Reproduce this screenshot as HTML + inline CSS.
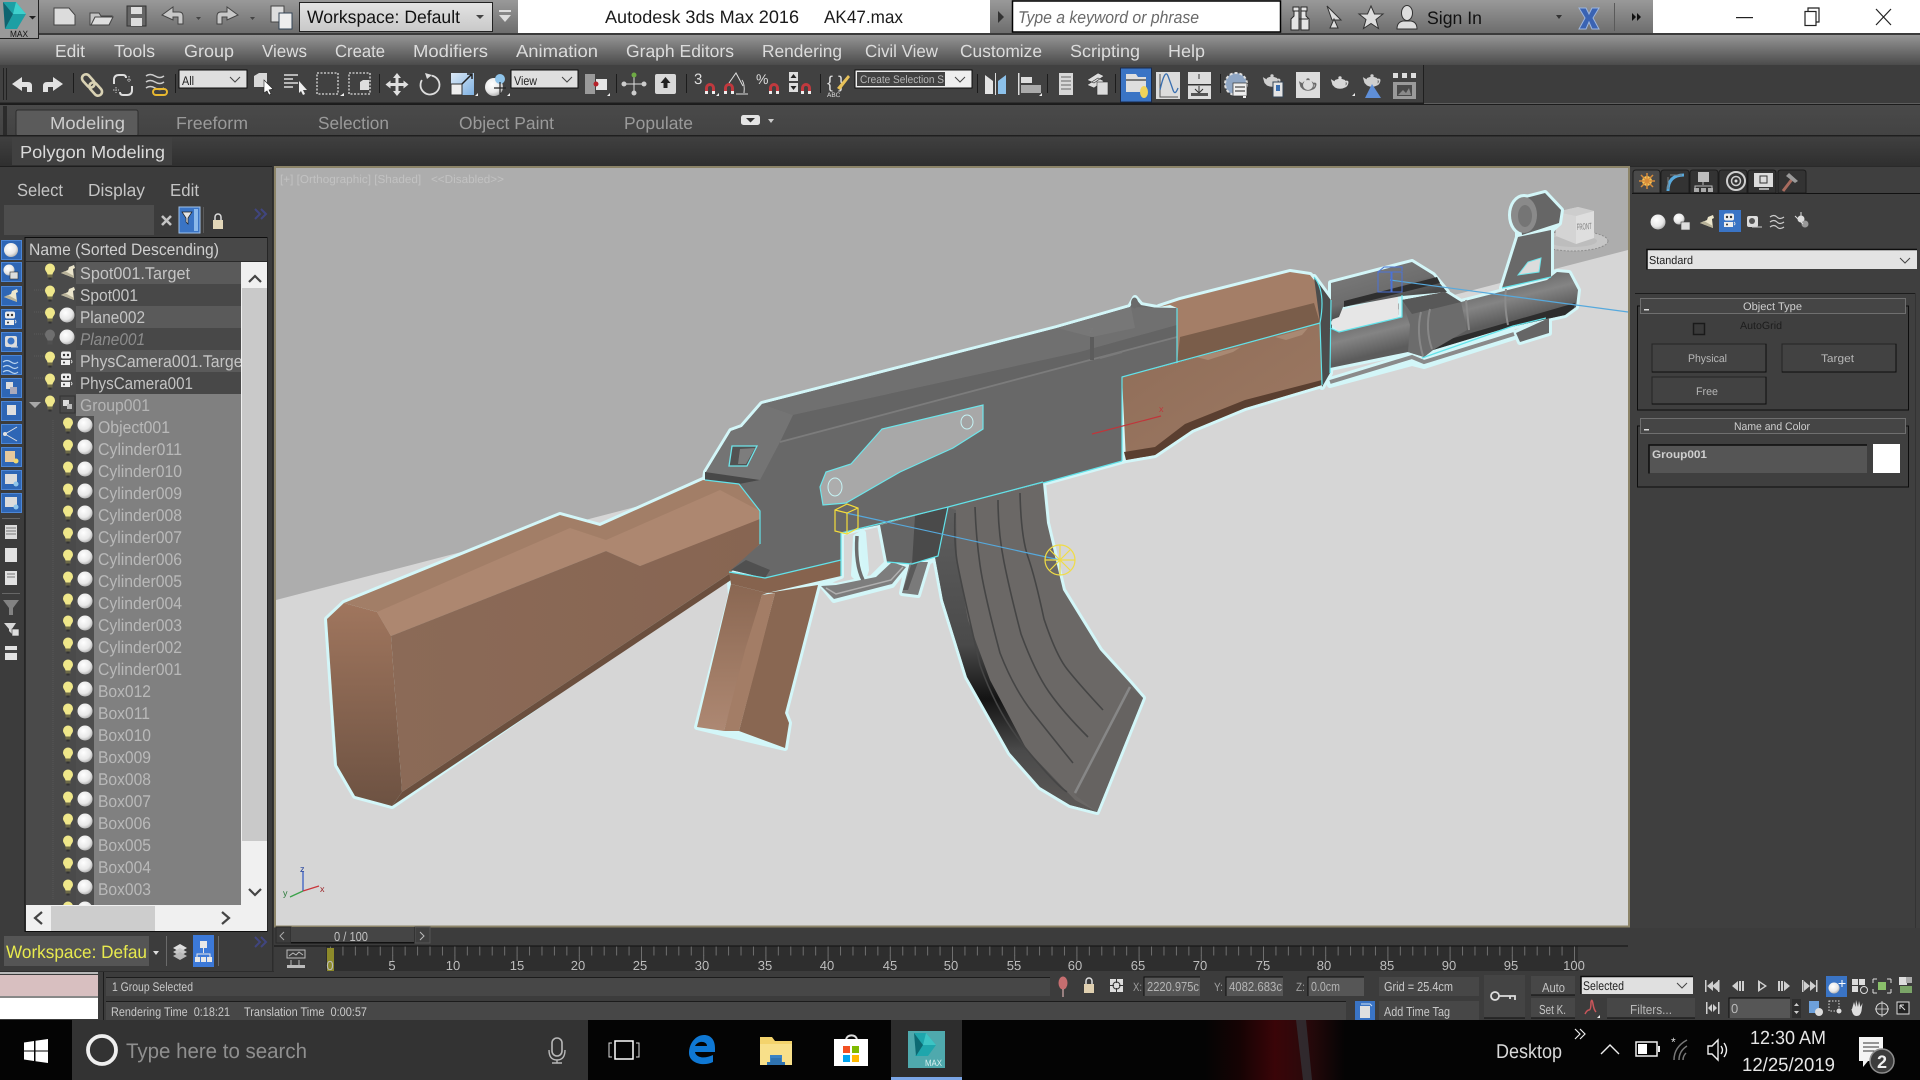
<!DOCTYPE html>
<html lang="en"><head><meta charset="utf-8"><title>Autodesk 3ds Max 2016 AK47.max</title>
<style>
html,body{margin:0;padding:0;background:#3c3c3c;width:1920px;height:1080px;overflow:hidden}
svg{display:block;position:absolute;left:0;top:0}
text{font-family:"Liberation Sans",sans-serif;white-space:pre}
.m{font-size:17.5px;fill:#dcdcdc}
.t{font-size:17px;fill:#c4c4c4}
.n{font-size:13px;fill:#bcbcbc;text-anchor:middle}
.i{fill:#e2e2e2}
</style></head><body>
<svg width="1920" height="1080" viewBox="0 0 1920 1080" xmlns="http://www.w3.org/2000/svg" text-rendering="geometricPrecision">
<defs>
<linearGradient id="gTitle" x1="0" y1="0" x2="0" y2="1"><stop offset="0" stop-color="#999"/><stop offset="1" stop-color="#6c6c6c"/></linearGradient>
<linearGradient id="gMenu" x1="0" y1="0" x2="0" y2="1"><stop offset="0" stop-color="#959595"/><stop offset="1" stop-color="#4b4b4b"/></linearGradient>
<linearGradient id="gRib" x1="0" y1="0" x2="0" y2="1"><stop offset="0" stop-color="#4a4a4a"/><stop offset="1" stop-color="#434343"/></linearGradient>
<linearGradient id="gRib2" x1="0" y1="0" x2="0" y2="1"><stop offset="0" stop-color="#414141"/><stop offset="1" stop-color="#2f2f2f"/></linearGradient>
<linearGradient id="gCombo" x1="0" y1="0" x2="0" y2="1"><stop offset="0" stop-color="#e4e4e4"/><stop offset="1" stop-color="#c8c8c8"/></linearGradient>
<linearGradient id="gEnd" x1="0" y1="0" x2="0" y2="1"><stop offset="0" stop-color="#a0765e"/><stop offset="1" stop-color="#6d5242"/></linearGradient>
<linearGradient id="gMain" x1="0" y1="0" x2="1" y2="0"><stop offset="0" stop-color="#8b6a57"/><stop offset="1" stop-color="#876552"/></linearGradient>
<linearGradient id="gHand" x1="0" y1="0" x2="1" y2="1"><stop offset="0" stop-color="#8f6d58"/><stop offset="1" stop-color="#9d7963"/></linearGradient>
<linearGradient id="gBarrel" gradientUnits="userSpaceOnUse" x1="1445" y1="294" x2="1455" y2="334"><stop offset="0" stop-color="#646464"/><stop offset="0.5" stop-color="#848484"/><stop offset="1" stop-color="#5c5c5c"/></linearGradient>
<linearGradient id="gTube" gradientUnits="userSpaceOnUse" x1="1380" y1="272" x2="1390" y2="304"><stop offset="0" stop-color="#757575"/><stop offset="0.55" stop-color="#6d6d6d"/><stop offset="1" stop-color="#4a4a4a"/></linearGradient>
<linearGradient id="gGrip" x1="0" y1="0" x2="0" y2="1"><stop offset="0" stop-color="#8a6752"/><stop offset="0.65" stop-color="#a27d67"/><stop offset="1" stop-color="#ad8873"/></linearGradient>
<linearGradient id="gMagS" x1="0" y1="0" x2="0" y2="1"><stop offset="0" stop-color="#5f5f5f"/><stop offset="0.45" stop-color="#4a4a4a"/><stop offset="0.63" stop-color="#141414"/><stop offset="0.8" stop-color="#4a4a4a"/><stop offset="1" stop-color="#5d5a58"/></linearGradient>
<radialGradient id="gSph" cx="0.4" cy="0.35" r="0.75"><stop offset="0" stop-color="#fff"/><stop offset="0.6" stop-color="#e8e8e8"/><stop offset="1" stop-color="#9e9e9e"/></radialGradient>
<linearGradient id="gBlue" x1="0" y1="0" x2="1" y2="1"><stop offset="0" stop-color="#dce9f6"/><stop offset="1" stop-color="#7fb1e2"/></linearGradient>
<linearGradient id="gRed" x1="0" y1="0" x2="1" y2="0"><stop offset="0" stop-color="#040404"/><stop offset="0.25" stop-color="#160304"/><stop offset="0.5" stop-color="#3a0508"/><stop offset="0.72" stop-color="#2a090b"/><stop offset="1" stop-color="#040404"/></linearGradient>
<symbol id="bulb" viewBox="0 0 12 18" width="12" height="18"><path d="M6 0.5a5 5 0 0 1 5 5c0 2.5-2 3.500-2.500 6h-5c-.5-2.500-2.500-3.500-2.500-6a5 5 0 0 1 5-5z" fill="#efe78a"/><rect x="3.500" y="11.500" width="5" height="3" fill="#6d6a48"/><rect x="4.500" y="14.500" width="3" height="2" fill="#333"/></symbol>
<symbol id="bulbg" viewBox="0 0 12 18" width="12" height="18"><path d="M6 0.5a5 5 0 0 1 5 5c0 2.5-2 3.500-2.500 6h-5c-.5-2.500-2.500-3.500-2.500-6a5 5 0 0 1 5-5z" fill="#6f6f6f"/><rect x="3.500" y="11.500" width="5" height="4" fill="#505050"/></symbol>
<symbol id="mag" viewBox="0 0 12 12" width="12" height="12"><path d="M1 12V6a5 5 0 0 1 10 0v6H8V6a2 2 0 0 0-4 0v6z" fill="#c0393e"/><rect x="1" y="9" width="3" height="3" fill="#eee"/><rect x="8" y="9" width="3" height="3" fill="#eee"/></symbol>
<symbol id="blueic" viewBox="0 0 21 20" width="21" height="20"><rect x="0.500" y="0.500" width="20" height="19" fill="#2e66b5" stroke="#4c86d6"/></symbol>
<symbol id="pot" viewBox="0 0 24 20" width="24" height="20"><path d="M6 7q6-3 12 0q2 4 0 9q-6 3-12 0q-2-5 0-9z"/><path d="M6 9L1 6l2 7 3 3z"/><path d="M18 8q5-1 4 3t-4 5l0-2q2-1 2-3t-2-1z"/><circle cx="12" cy="4.500" r="2"/></symbol>
<symbol id="spot" viewBox="0 0 16 16" width="16" height="16"><path d="M14 1l1 3-2 1 1 9-13-5 7-3 1-3z" fill="#ece6cc"/><path d="M1 9l13 5 0-2-9-5z" fill="#b9b39a"/></symbol>
<symbol id="cam" viewBox="0 0 14 16" width="14" height="16"><rect x="1" y="0.500" width="10" height="7" rx="2" fill="#eee"/><circle cx="4" cy="4" r="1.200" fill="#333"/><circle cx="8" cy="4" r="1.200" fill="#333"/><rect x="1" y="9" width="9" height="5" fill="#eee"/><circle cx="4" cy="11.500" r="1" fill="#333"/><path d="M11 12q2-1 0-3" fill="none" stroke="#ddd"/></symbol>
<g id="sil">
<polygon points="327,619 344,603 560,515 600,526 703,480 739,484 760,511 760,544 729,574 392,806 355,796 337,765"/>
<polygon points="762,404 1057,328 1130,307 1135,298 1141,305 1157,308 1177,308 1177,363 1320,323 1322,385 1245,408 1192,430 1155,455 1126,460 1043,483 948,507 841,533 841,560 765,578 731,570 760,544 760,511 739,484 705,480 706,472 731,431 742,427"/>
<polygon points="1159,307 1180,300 1290,272 1310,275 1322,290 1320,323 1177,363"/>
<polygon points="729,572 731,595 697,727 785,748 789,723 785,713 818,585 841,576 841,560 765,578"/>
<path d="M821 584l13 16 58-15 14-18-18-5-16 16-36 8z"/>
<polygon points="856,537 863,533 866,570 862,582 854,575"/>
<polygon points="880,525 948,507 938,556 928,562 918,595 902,593 908,562 887,562"/>
<polygon points="1043,483 1047,523 1063,590 1100,650 1130,683 1143,698 1097,812 1070,805 1040,787 1010,753 967,677 943,600 935,557 948,507"/>
<polygon points="1314,277 1333,303 1330,373 1322,387 1320,323"/>
<polygon points="1331,283 1412,262 1433,275 1447,292 1402,300 1343,307 1339,317 1331,320"/>
<polygon points="1330,328 1339,332 1402,317 1402,300 1445,292 1461,302 1547,280 1557,272 1569,273 1578,290 1576,307 1565,315 1506,328 1433,350 1424,357 1408,352 1330,368"/>
<polygon points="1330,380 1412,355 1424,360 1512,331 1514,337 1424,366 1412,363 1330,385"/>
<polygon points="1516,333 1549,318 1549,333 1520,342"/>
<polygon points="1502,288 1518,237 1518,200 1545,193 1561,210 1559,223 1551,230 1551,277"/>
<ellipse cx="1524" cy="215" rx="13" ry="18"/>
</g>
<clipPath id="rows"><rect x="25" y="262" width="216" height="643"/></clipPath>
<clipPath id="wsclip"><rect x="4" y="936" width="145" height="30"/></clipPath>
</defs>

<!-- base -->
<rect width="1920" height="1080" fill="#3c3c3c"/>

<!-- title bar -->
<rect x="0" y="0" width="518" height="34" fill="url(#gTitle)"/>
<rect x="518" y="0" width="472" height="34" fill="#fff"/>
<rect x="990" y="0" width="663" height="34" fill="url(#gTitle)"/>
<rect x="1653" y="0" width="267" height="34" fill="#fff"/>
<rect x="0" y="33" width="1920" height="1.500" fill="#3a3a3a"/>
<!-- menu -->
<rect x="0" y="35" width="1920" height="30" fill="url(#gMenu)"/>
<!-- max button -->
<path d="M0 0H38V38H0Z" fill="#9a9a9a"/><path d="M0 38.500H38.500V0" fill="none" stroke="#222"/>
<path d="M3 2h13l10 12-9 15H5l8-15z" fill="#1c9fa4"/><path d="M3 2l10 12-8 15z" fill="#0d6470"/><path d="M16 2l10 12H13z" fill="#3fd0cc"/>
<text x="10" y="37" font-size="9" fill="#111" textLength="18" lengthAdjust="spacingAndGlyphs">MAX</text>
<path d="M29 16h7l-3.500 3.500z" fill="#222"/>
<!-- qat icons -->
<path d="M54 8h15l6 7v10H54z" fill="#dcdcdc" stroke="#444"/>
<path d="M90 13h9l2 3h11l-3 9H90z" fill="#c4c4c4" stroke="#444"/><path d="M91 25l4-8h18l-4 8z" fill="#dedede" stroke="#444"/>
<path d="M127 6h19v20h-19z" fill="#666" stroke="#333"/><rect x="131" y="7" width="11" height="7" fill="#ddd"/><rect x="131" y="18" width="11" height="8" fill="#ddd"/>
<path d="M162 15l11-8v5h6q4 0 4 4v8h-5v-7h-5v3z" fill="#c8c8c8" stroke="#444"/>
<path d="M196 17h5l-2.500 3z" fill="#444"/>
<path d="M238 15l-11-8v5h-6q-4 0-4 4v8h5v-7h5v3z" fill="#c8c8c8" stroke="#444"/>
<path d="M250 17h5l-2.500 3z" fill="#444"/>
<rect x="271" y="6" width="13" height="16" fill="#ddd" stroke="#444"/><rect x="279" y="13" width="13" height="16" fill="#eee" stroke="#345"/>
<rect x="299.500" y="2.500" width="193" height="29" fill="url(#gCombo)" stroke="#222"/>
<text x="307" y="23" font-size="18" fill="#111" textLength="153" lengthAdjust="spacingAndGlyphs">Workspace: Default</text>
<path d="M476 15h8l-4 4z" fill="#444"/>
<rect x="499" y="10" width="12" height="2" fill="#ddd"/><path d="M499 15h12l-6 7z" fill="#ddd"/>
<text x="605" y="23" font-size="18" fill="#1a1a1a" textLength="194" lengthAdjust="spacingAndGlyphs">Autodesk 3ds Max 2016</text>
<text x="824" y="23" font-size="18" fill="#1a1a1a" textLength="79" lengthAdjust="spacingAndGlyphs">AK47.max</text>
<path d="M998 11l6 6-6 6z" fill="#333"/>
<rect x="1012.500" y="1" width="268" height="31" fill="#fff" stroke="#000" stroke-width="1.500"/>
<text x="1018" y="23" font-size="17" font-style="italic" fill="#6a6a6a" textLength="181" lengthAdjust="spacingAndGlyphs">Type a keyword or phrase</text>
<!-- info icons -->
<g fill="#e4e4e4" stroke="#2a2a2a"><path d="M1291 30v-11l3-3v-5h5v19z"/><path d="M1301 30V11h5v5l3 3v11z"/><path d="M1293 7h6v4h-6zM1301 7h6v4h-6z"/></g>
<path d="M1299 19h9" stroke="#2a2a2a"/>
<path d="M1327 6l14 14-9 0zM1330 28l4-9 4 9z" fill="#ddd" stroke="#333"/>
<path d="M1371 6l3.500 8h8.500l-7 5.500 2.500 9-7.500-5-7.500 5 2.500-9-7-5.500h8.500z" fill="#ddd" stroke="#333"/>
<ellipse cx="1407" cy="13" rx="5.500" ry="7.500" fill="#ddd" stroke="#333"/><path d="M1397 29q0-7 6-8h8q6 1 6 8z" fill="#ddd" stroke="#333"/>
<text x="1427" y="24" font-size="18" fill="#111" textLength="55" lengthAdjust="spacingAndGlyphs">Sign In</text>
<path d="M1556 15h6l-3 4z" fill="#333"/>
<path d="M1579 8h7l3 6 3-6h7l-6 10 6 11h-7l-3-7-3 7h-7l6-11z" fill="#3a63b3" stroke="#9db6df"/>
<rect x="1614" y="3" width="1" height="28" fill="#5a5a5a"/>
<path d="M1632 13l4 4-4 4zM1637 13l4 4-4 4z" fill="#111"/>
<!-- window buttons -->
<rect x="1736" y="17" width="17" height="1.200" fill="#222"/>
<rect x="1805" y="11.500" width="11" height="14" fill="#fff" stroke="#222" stroke-width="1.200"/><path d="M1808 11v-3h11v14h-3" fill="none" stroke="#222" stroke-width="1.200"/>
<path d="M1876 9l15 16M1891 9l-15 16" stroke="#222" stroke-width="1.200"/>

<!-- menu text -->
<text class="m" x="55" y="57" textLength="30" lengthAdjust="spacingAndGlyphs">Edit</text>
<text class="m" x="114" y="57" textLength="41" lengthAdjust="spacingAndGlyphs">Tools</text>
<text class="m" x="184" y="57" textLength="50" lengthAdjust="spacingAndGlyphs">Group</text>
<text class="m" x="262" y="57" textLength="45" lengthAdjust="spacingAndGlyphs">Views</text>
<text class="m" x="335" y="57" textLength="50" lengthAdjust="spacingAndGlyphs">Create</text>
<text class="m" x="413" y="57" textLength="75" lengthAdjust="spacingAndGlyphs">Modifiers</text>
<text class="m" x="516" y="57" textLength="82" lengthAdjust="spacingAndGlyphs">Animation</text>
<text class="m" x="626" y="57" textLength="108" lengthAdjust="spacingAndGlyphs">Graph Editors</text>
<text class="m" x="762" y="57" textLength="80" lengthAdjust="spacingAndGlyphs">Rendering</text>
<text class="m" x="865" y="57" textLength="73" lengthAdjust="spacingAndGlyphs">Civil View</text>
<text class="m" x="960" y="57" textLength="82" lengthAdjust="spacingAndGlyphs">Customize</text>
<text class="m" x="1070" y="57" textLength="70" lengthAdjust="spacingAndGlyphs">Scripting</text>
<text class="m" x="1168" y="57" textLength="37" lengthAdjust="spacingAndGlyphs">Help</text>

<!-- main toolbar -->
<rect x="0" y="65" width="1920" height="39" fill="#3d3d3d"/>
<rect x="0" y="65" width="1424" height="38" fill="#414141"/>
<rect x="1423" y="65" width="1" height="38" fill="#1f1f1f"/>
<rect x="0" y="102.500" width="1424" height="1.500" fill="#1e1e1e"/>
<rect x="1424" y="103" width="496" height="2" fill="#5e5e5e"/>
<rect x="3" y="68" width="1" height="32" fill="#222"/><rect x="6" y="68" width="1" height="32" fill="#222"/>
<!-- undo redo -->
<path d="M12 84l10-7v5h6q4 0 4 4v6h-5v-5h-5v4z" class="i"/>
<path d="M63 84l-10-7v5h-6q-4 0-4 4v6h5v-5h5v4z" class="i"/>
<rect x="73" y="73" width="1" height="20" fill="#1c1c1c"/>
<!-- link -->
<g transform="rotate(48 92 85)" fill="none" stroke="#d9d2b4" stroke-width="2.600"><rect x="79" y="81" width="15" height="8" rx="4"/><rect x="90" y="81" width="15" height="8" rx="4"/></g>
<!-- unlink -->
<path d="M114 84v-4q0-5 5-5h4q3 0 3 3M132 86v4q0 5-5 5h-4q-3 0-3-3" fill="none" stroke="#ddd" stroke-width="2"/>
<path d="M127 80h5M129 76v6M113 90h6M116 87v6" stroke="#999" stroke-width="1.500" stroke-dasharray="1.500 1"/>
<path d="M146 76q4-3 9 0t9 0M146 82q4-3 9 0t9 0M146 88q4-3 9 0t9 0" fill="none" stroke="#ccc" stroke-width="1.500"/><rect x="153" y="89" width="14" height="6" rx="3" fill="none" stroke="#e8b830" stroke-width="2"/>
<rect x="175" y="74" width="1" height="19" fill="#1c1c1c"/>
<!-- all combo -->
<rect x="179" y="70" width="68" height="18" fill="#dfdfdf" stroke="#0d0d0d"/>
<text x="182" y="85" font-size="12.500" fill="#222" textLength="12" lengthAdjust="spacingAndGlyphs">All</text>
<path d="M230 77l5 5 5-5" fill="none" stroke="#444"/>
<!-- select object -->
<path d="M254 76l5-3h8v14h-13z" fill="#d8d8d8"/><path d="M264 80l9 9-4 1 2 4-2 1-2-4-3 2z" fill="#fff" stroke="#222" stroke-width=".6"/>
<path d="M284 75h14M284 79h9M284 83h14M284 87h9" stroke="#ddd" stroke-width="1.500"/><path d="M299 81l8 9-4 0 2 4-2 1-2-4-2 2z" fill="#eee"/>
<rect x="317" y="73" width="21" height="21" fill="none" stroke="#ddd" stroke-dasharray="2 1.500" stroke-width="1.300"/><path d="M340 96l4-3v3z" fill="#eee"/>
<rect x="349" y="73" width="21" height="21" fill="none" stroke="#ddd" stroke-dasharray="2 1.500" stroke-width="1.300"/><path d="M360 82l3-2h6v10h-9z" fill="#dedede"/>
<rect x="379" y="74" width="1" height="19" fill="#1c1c1c"/>
<!-- move -->
<path d="M397 73l4 5h-2.500v5h5v-2.500l5 4-5 4v-2.500h-5v5h2.500l-4 5-4-5h2.500v-5h-5v2.500l-5-4 5-4v2.500h5v-5h-2.500z" fill="#e0e0e0"/>
<!-- rotate -->
<circle cx="430" cy="85" r="9.500" fill="none" stroke="#ddd" stroke-width="1.800" stroke-dasharray="48 12" transform="rotate(-80 430 85)"/><path d="M425 73l7 2-5 4z" fill="#ddd"/>
<!-- scale -->
<rect x="451" y="73" width="23" height="22" fill="url(#gBlue)"/><rect x="451" y="84" width="11" height="11" fill="#eee" stroke="#333"/><path d="M462 84l10-10m-5 0h5v5" stroke="#222" fill="none" stroke-width="1.500"/><path d="M475 96l3-3v3z" fill="#eee"/>
<!-- placement -->
<circle cx="494" cy="87" r="9" fill="url(#gSph)"/><circle cx="500" cy="79" r="5" fill="#8fc4ea"/><path d="M500 82v12M494 88h12" stroke="#222" stroke-width="1.200"/>
<path d="M507 96l3-3v3z" fill="#eee"/>
<!-- view combo -->
<rect x="511" y="70" width="67" height="18" fill="#dfdfdf" stroke="#0d0d0d"/>
<text x="514" y="85" font-size="12.500" fill="#222" textLength="23" lengthAdjust="spacingAndGlyphs">View</text>
<path d="M562 77l5 5 5-5" fill="none" stroke="#444"/>
<!-- pivot -->
<rect x="585" y="74" width="10" height="20" fill="#9a9a9a"/><rect x="596" y="79" width="11" height="11" fill="#e5e5e5"/><circle cx="596" cy="84" r="2.500" fill="#b6212a"/><path d="M607 96l3-3v3z" fill="#eee"/>
<rect x="616" y="74" width="1" height="19" fill="#1c1c1c"/>
<!-- manipulate -->
<path d="M634 74v20M624 84h20" stroke="#ddd"/><circle cx="634" cy="75" r="2.500" fill="#6eaa44"/><circle cx="624" cy="84" r="2.500" fill="#ccc"/><circle cx="644" cy="84" r="2.500" fill="#ccc"/><circle cx="634" cy="93" r="2.500" fill="#ccc"/>
<!-- key -->
<rect x="655" y="74" width="21" height="20" rx="2" fill="#d8d8d8"/><path d="M665.500 77l5 6h-3v5h-4v-5h-3z" fill="#222"/>
<rect x="686" y="74" width="1" height="19" fill="#1c1c1c"/>
<!-- snaps -->
<text x="694" y="84" font-size="15" fill="#ddd">3</text><use href="#mag" x="704" y="82"/><path d="M716 96l3-3v3z" fill="#eee"/>
<use href="#mag" x="723" y="82"/><path d="M729 83l7-10 7 13M742 80q3 4 2 13M736 94h12" fill="none" stroke="#ddd"/>
<text x="756" y="84" font-size="14" fill="#ddd">%</text><use href="#mag" x="768" y="82"/>
<rect x="789" y="72" width="9" height="9" fill="#ddd"/><rect x="789" y="83" width="9" height="9" fill="#ddd"/><path d="M793.500 74l3 4h-6zM793.500 90l3-4h-6z" fill="#222"/><use href="#mag" x="800" y="82"/>
<rect x="820" y="74" width="1" height="19" fill="#1c1c1c"/>
<text x="827" y="88" font-size="17" fill="#ddd" textLength="17" lengthAdjust="spacingAndGlyphs">{ }</text><path d="M837 88l11-13 2 2-10 13z" fill="#e8c25a"/><text x="827" y="97" font-size="6.500" fill="#ddd">ABC</text>
<!-- selection combo -->
<rect x="855" y="70" width="117" height="18" fill="#efefef" stroke="#0d0d0d"/><rect x="857" y="72" width="88" height="14" fill="#424242"/>
<text x="860" y="83" font-size="11" fill="#b8b8b8" textLength="84" lengthAdjust="spacingAndGlyphs">Create Selection S</text>
<path d="M955 77l5 5 5-5" fill="none" stroke="#444"/>
<rect x="977" y="74" width="1" height="19" fill="#1c1c1c"/>
<!-- mirror align -->
<path d="M985 75l8 6v13h-8z" fill="#e4e4e4"/><path d="M1006 75l-8 6v13h8z" fill="#8cc1ea"/><rect x="995" y="73" width="1" height="22" fill="#ddd"/>
<rect x="1018" y="73" width="1.500" height="22" fill="#ddd"/><rect x="1021" y="77" width="11" height="6" fill="#ddd"/><rect x="1021" y="85" width="20" height="8" fill="#aaa"/><path d="M1039 96l3-3v3z" fill="#eee"/>
<rect x="1047" y="74" width="1" height="19" fill="#1c1c1c"/>
<!-- list -->
<rect x="1059" y="73" width="14" height="22" fill="#d8d8d8"/><path d="M1061 77h10M1061 81h10M1061 85h10M1061 89h10" stroke="#666"/>
<!-- layers -->
<path d="M1087 80l11-7 6 3-10 7zM1087 85l11-7 6 3-10 7z" fill="#ddd" stroke="#333" stroke-width=".6"/><rect x="1097" y="82" width="11" height="13" fill="#dcdcdc" stroke="#333" stroke-width=".6"/>
<rect x="1115" y="74" width="1" height="19" fill="#1c1c1c"/>
<!-- active blue -->
<rect x="1120.500" y="68" width="31" height="34" fill="#3a74c5" stroke="#1a2a4a"/>
<path d="M1126 78v-4h10l2 3h8v15h-20z" fill="#dedede"/><rect x="1126" y="79" width="20" height="2" fill="#777"/><ellipse cx="1144" cy="92" rx="4" ry="6" fill="#f0d35a"/>
<!-- curve -->
<rect x="1156" y="72" width="24" height="27" fill="#dcdcdc"/><path d="M1160 74v23h18" stroke="#555" fill="none"/><path d="M1160 90q5-22 8-14t5 14 5-2" stroke="#3a6fb0" fill="none" stroke-width="1.300"/>
<!-- schematic -->
<rect x="1188" y="72" width="23" height="27" fill="#dcdcdc"/><rect x="1188" y="84" width="23" height="1.500" fill="#333"/><path d="M1199 74v5M1199 86v6m-4-3l4 4 4-4" stroke="#333" fill="none"/><rect x="1191" y="93" width="17" height="3" fill="#555"/>
<rect x="1220" y="74" width="1" height="19" fill="#1c1c1c"/>
<!-- material -->
<circle cx="1236" cy="84" r="11" fill="#8fa6c4"/><circle cx="1236" cy="84" r="11" fill="none" stroke="#ddd" stroke-width="2" stroke-dasharray="3 2"/><rect x="1233" y="83" width="14" height="13" fill="#eee" stroke="#333" stroke-width=".7"/><path d="M1235 87h10M1235 91h10" stroke="#222"/>
<rect x="1243" y="96" width="3" height="2" fill="#eee"/>
<!-- teapots -->
<use href="#pot" x="1262" y="72" width="20" height="17" fill="#cfcfcf"/><rect x="1273" y="82" width="10" height="15" fill="#e4e4e4" stroke="#345"/><rect x="1276" y="85" width="4" height="6" fill="#3a6fb0"/>
<rect x="1296" y="72" width="24" height="26" fill="#dcdcdc"/><use href="#pot" x="1298" y="76" width="20" height="17" fill="#6a6a6a"/><ellipse cx="1308" cy="85" rx="5" ry="5" fill="#dcdcdc"/>
<use href="#pot" x="1330" y="74" width="20" height="17" fill="#d8d8d8"/><path d="M1352 96l3-3v3z" fill="#eee"/>
<use href="#pot" x="1362" y="72" width="20" height="17" fill="#cfcfcf"/><path d="M1372 84l9 14h-16z" fill="#5f8fd8"/>
<rect x="1393" y="82" width="23" height="17" fill="#9a9a9a"/><rect x="1397" y="85" width="15" height="11" fill="#4a4a4a"/><path d="M1398 95l5-5 3 3 3-5 2 7z" fill="#8a8a8a"/><rect x="1393" y="73" width="5" height="5" fill="#ddd"/><rect x="1402" y="73" width="5" height="5" fill="#ddd"/><rect x="1411" y="73" width="5" height="5" fill="#ddd"/>

<!-- ribbon -->
<rect x="0" y="104" width="1920" height="31" fill="url(#gRib)"/>
<rect x="0" y="104" width="1920" height="1" fill="#1c1c1c"/>
<rect x="3" y="106" width="4" height="60" fill="#2b2b2b"/>
<rect x="16" y="110" width="122" height="26" rx="2" fill="#5b5b5b" stroke="#2d2d2d"/>
<text x="50" y="129" font-size="17.500" fill="#cdcdcd" textLength="75" lengthAdjust="spacingAndGlyphs">Modeling</text>
<text x="176" y="129" font-size="17.500" fill="#9a9a9a" textLength="72" lengthAdjust="spacingAndGlyphs">Freeform</text>
<text x="318" y="129" font-size="17.500" fill="#9a9a9a" textLength="71" lengthAdjust="spacingAndGlyphs">Selection</text>
<text x="459" y="129" font-size="17.500" fill="#9a9a9a" textLength="95" lengthAdjust="spacingAndGlyphs">Object Paint</text>
<text x="624" y="129" font-size="17.500" fill="#9a9a9a" textLength="69" lengthAdjust="spacingAndGlyphs">Populate</text>
<rect x="741" y="115" width="19" height="10" rx="2.500" fill="#e4e4e4"/><path d="M746 118h9l-4.500 4.500z" fill="#333"/><path d="M768 119h6l-3 4z" fill="#ccc"/>
<rect x="0" y="135" width="1920" height="31" fill="url(#gRib2)"/>
<rect x="0" y="135" width="1920" height="1.500" fill="#1f1f1f"/>
<rect x="12" y="137" width="160" height="28" fill="#414141"/>
<text x="20" y="158" font-size="17.500" fill="#dadada" textLength="145" lengthAdjust="spacingAndGlyphs">Polygon Modeling</text>

<!-- viewport -->
<rect x="274" y="166" width="1356" height="761.500" fill="#8c8468"/>
<rect x="276" y="168" width="1352" height="757.500" fill="#adadad"/>
<polygon points="276,600 1628,250 1628,925.500 276,925.500" fill="#d6d6d6"/>
<text x="280" y="183" font-size="11.500" fill="#c2c2c2" textLength="224" lengthAdjust="spacingAndGlyphs">[+] [Orthographic] [Shaded]   &lt;&lt;Disabled&gt;&gt;</text>

<!-- view cube -->
<ellipse cx="1573" cy="241" rx="35" ry="10" fill="#c6c6c6" stroke="#8e8e8e" stroke-dasharray="2 1.500"/>
<ellipse cx="1573" cy="241" rx="24" ry="6" fill="#bdbdbd"/>
<path d="M1556 212l22-5 16 4v27l-18 6-20-8z" fill="#d4d4d4"/><path d="M1576 216l18-5v27l-18 6z" fill="#dedede"/>
<path d="M1556 212l22-5 16 4-18 5z" fill="#cdcdcd"/>
<text x="1577" y="230" font-size="9" fill="#7e7e7e" textLength="15" lengthAdjust="spacingAndGlyphs" transform="rotate(-4 1577 230)">FRONT</text>

<!-- halo -->
<use href="#sil" fill="#d5f7f8" stroke="#d3f6f8" stroke-width="6" stroke-linejoin="round"/>

<!-- stock -->
<polygon points="327,619 344,603 377,612 391,636 402,792 392,806 355,796 337,765" fill="url(#gEnd)"/>
<polygon points="344,603 560,515 600,526 703,480 739,484 760,511 760,520 640,566 606,551 391,636 377,612" fill="#a27e67"/>
<polygon points="377,612 570,528 606,540 720,490 760,511 760,520 640,566 606,551 391,636" fill="#ad8770"/>
<polygon points="391,636 606,551 640,566 760,519 760,544 729,574 402,792" fill="url(#gMain)"/>
<polygon points="729,574 402,792 392,806 734,578" fill="#6b4f3e"/>

<!-- magazine -->
<polygon points="1043,483 1047,523 1063,590 1100,650 1130,683 1143,698 1097,812 1070,805 1040,787 1010,753 967,677 943,600 935,557 948,507" fill="#6b6866"/>
<polygon points="948,507 956,510 957,560 968,620 990,680 1027,750 1075,800 1097,812 1070,805 1040,787 1010,753 967,677 943,600 935,557" fill="url(#gMagS)"/>
<polygon points="1130,687 1143,698 1097,812 1075,795" fill="#666361"/>
<path d="M1130 687L1075 793" stroke="#878787" stroke-width="2.500" fill="none"/>
<g fill="none" stroke="#454545" stroke-width="1.600">
<path d="M1020 493q1 44 8 64t16 62q12 36 23 50t36 41"/>
<path d="M998 500q0 32 6 62t17 72q14 38 28 58t39 45"/>
<path d="M975 507q1 30 5 58t20 88q14 36 33 60t40 50"/>
<path d="M955 513q-1 30 2 48t23 104q18 50 47 85t40 42"/>
</g>
<!-- magazine well -->
<polygon points="880,525 948,507 938,556 912,564 887,562" fill="#656565"/>
<polygon points="915,516 948,507 938,556 912,564" fill="#4a4a4a"/>
<polygon points="910,562 928,562 918,595 902,593" fill="#7a7a7a"/>
<polygon points="912,562 918,562 908,590 903,590" fill="#5a5a5a"/>

<!-- grip -->
<polygon points="729,572 765,578 841,560 841,576 767,593 731,584" fill="#86634e"/>
<polygon points="731,584 767,593 762,595 724,731 697,727" fill="url(#gGrip)"/>
<polygon points="767,593 818,585 785,713 789,723 785,748 739,731 775,593" fill="#896752"/>
<polygon points="762,595 775,593 758,660 739,731 724,731 745,650" fill="#a37d66"/>

<!-- guard + trigger -->
<path d="M857 536q-2 28 6 44" stroke="#6c6c6c" stroke-width="3.500" fill="none"/>
<path d="M821 586l13 13 58-15 14-17-14-5-16 15-40 8z" fill="#7d7d7d"/>
<path d="M826 588l10 6 55-14 12-13" stroke="#b0b0b0" stroke-width="1.500" fill="none"/>

<!-- receiver -->
<polygon points="762,404 1057,328 1130,307 1135,298 1141,305 1157,308 1177,308 1177,363 1122,377 1122,461 1043,483 948,507 879,525 841,533 841,560 765,578 731,570 760,544 760,511 739,484 705,480 706,472 731,431 742,427" fill="#686868"/>
<polygon points="762,404 1057,328 1130,307 1177,308 1177,325 1080,352 793,415" fill="#707070"/>
<polygon points="793,415 1080,352 1177,325 1177,337 780,442" fill="#646464"/>
<path d="M780 442L1177 337" stroke="#7c7c7c" stroke-width="1.800"/>
<polygon points="762,404 793,415 780,442 760,480 739,484 705,480 706,472 731,431 742,427" fill="#747474"/>
<polygon points="705,472 760,480 739,484 705,480" fill="#484848"/>
<polygon points="731,570 765,578 770,570 746,560" fill="#505050"/>
<polygon points="1057,328 1131,307 1135,328 1092,337" fill="#777"/>
<rect x="1090" y="337" width="4" height="23" fill="#5c5c5c"/>
<path d="M1100 358l22-6" stroke="#7a7a7a" stroke-width="2"/>
<ellipse cx="1134.500" cy="303" rx="3.500" ry="5.500" fill="#6a6a6a"/>
<!-- window -->
<polygon points="732,446 757,446 747,466 729,466" fill="#525252" stroke="#6fe5ea" stroke-width="1.300"/>
<polygon points="740,449 755,448 746,464 738,464" fill="#7d7d7d"/>
<!-- dust plate -->
<polygon points="983,405 983,429 953,448 900,472 846,503 823,505 820,487 826,472 851,464 882,429" fill="#a8a8a8" stroke="#6fe5ea" stroke-width="1.200"/>
<ellipse cx="967" cy="422" rx="6" ry="7" fill="#a4a4a4" stroke="#c6f4f6" stroke-width="1"/>
<ellipse cx="835" cy="487" rx="7" ry="9" fill="#adadad" stroke="#c6f4f6" stroke-width="1"/>

<!-- handguards -->
<polygon points="1159,307 1180,300 1290,272 1310,275 1322,290 1320,323 1177,363 1177,308 1170,305" fill="#a47e67"/>
<polygon points="1180,337 1314,303 1320,323 1177,363" fill="#7a5d4a"/>
<polygon points="1122,377 1177,363 1320,323 1322,385 1245,408 1192,430 1155,455 1126,460" fill="url(#gHand)"/>
<polygon points="1126,460 1155,455 1192,430 1245,408 1322,385 1322,380 1245,400 1185,424 1155,447 1124,452" fill="#5a3f30"/>
<polygon points="1196,357 1241,347 1233,352 1208,360" fill="#a98973"/>
<polygon points="1275,337 1308,328 1302,335 1286,340" fill="#a98973"/>
<!-- collar -->
<polygon points="1314,277 1333,303 1330,373 1322,387 1320,323" fill="#4c4c4c"/>
<!-- window between tubes -->
<polygon points="1341,310 1398,295 1398,317 1339,332 1330,323" fill="#e6e6e6"/>
<!-- gas tube -->
<polygon points="1331,283 1412,262 1433,275 1447,292 1402,296 1343,307 1339,317 1331,320" fill="url(#gTube)"/>
<polygon points="1344,301 1437,277 1440,283 1344,307" fill="#2f2f2f"/>
<!-- barrel -->
<polygon points="1330,328 1339,332 1402,317 1402,300 1445,292 1461,302 1547,280 1557,272 1569,273 1578,290 1576,307 1565,315 1506,328 1433,350 1424,357 1408,352 1330,368" fill="url(#gBarrel)"/>
<polygon points="1433,344 1575,303 1574,308 1565,315 1506,328 1433,350" fill="#2d2d2d"/>
<polygon points="1402,300 1445,292 1461,302 1467,330 1433,350 1424,357 1408,352 1410,325" fill="#6c6c6c"/>
<polygon points="1402,300 1445,292 1461,302 1412,314" fill="#585858"/>
<path d="M1421 312q-5 20 2 44M1430 309q-5 20 2 40" stroke="#878787" stroke-width="2" fill="none"/>
<path d="M1466 300l3 30M1506 289q-2 16 2 36" stroke="#8c8c8c" stroke-width="2" fill="none"/>
<!-- rod -->
<path d="M1330 382l82-25 12 5 90-28" stroke="#8a8a8a" stroke-width="4" fill="none"/>
<polygon points="1516,333 1549,318 1549,333 1520,342" fill="#666"/>
<!-- front sight -->
<polygon points="1502,288 1518,237 1551,230 1551,277" fill="#696969"/>
<polygon points="1518,275 1528,262 1541,258 1539,272" fill="#dcdcdc" stroke="#6fe5ea"/>
<polygon points="1518,200 1545,193 1561,210 1559,223 1522,235" fill="#666"/>
<ellipse cx="1524" cy="215" rx="13" ry="18" fill="#8a8a8a"/>
<ellipse cx="1525" cy="216" rx="7" ry="11" fill="#757575"/>

<!-- selection lines -->
<g fill="none" stroke="#62e3ea" stroke-width="1.200" stroke-linejoin="round">
<path d="M729 572l36 6 76-18 0-27 107-26 95-25M841 560v16"/>
<path d="M1122 461V377l198-54M1177 308v55"/>
<path d="M1043 483l79-22M760 544V511l-21-27-34-4"/>
<path d="M1330 328l9 4 63-15V295M1402 317v-22"/>
<path d="M1314 277q12 14 6 46l2 62M1331 300l-1 73"/>
<path d="M1422 358l91-32 33-8M1502 288l49-11"/>
<path d="M948 507l-10 49-26 8-25-2"/>
</g>

<!-- helper lines -->
<path d="M846 513L1060 560" stroke="#56a9dd" stroke-width="1.200"/>
<path d="M1390 280L1628 312" stroke="#56a9dd" stroke-width="1.200"/>
<g fill="none" stroke="#4b72d6" stroke-width="1"><rect x="1378" y="272" width="14" height="20"/><rect x="1391" y="272" width="11" height="20" /><path d="M1378 272l6-5h18v4"/></g>
<path d="M1092 434L1161 416" stroke="#c0353a" stroke-width="1.200"/>
<text x="1159" y="412" font-size="9" fill="#c0353a">x</text>
<text x="1089" y="333" font-size="9" fill="#7a7a7a">z</text>
<!-- yellow box -->
<g fill="none" stroke="#f4dc3a" stroke-width="1.200"><path d="M835 510l12-6 11 4v20l-11 6-12-3z"/><path d="M835 510l12 3 11-5M847 513v21"/></g>
<!-- yellow sun -->
<g fill="none" stroke="#f0dc45" stroke-width="1.200"><circle cx="1060" cy="560" r="15"/><path d="M1045 560h30M1060 545v30M1050 550l20 20M1070 550l-20 20"/></g>
<!-- axis -->
<path d="M303 891v-20" stroke="#3a5fc4" stroke-width="1.300"/><path d="M303 891l16-5" stroke="#c9363b" stroke-width="1.300"/><path d="M303 891l-13 6" stroke="#3aa24a" stroke-width="1.300"/>
<text x="300" y="872" font-size="9" fill="#1f3f9a">z</text><text x="320" y="892" font-size="9" fill="#9a2226">x</text><text x="283" y="896" font-size="9" fill="#2a7a3a">y</text>

<!-- left panel -->
<rect x="0" y="166" width="274" height="806" fill="#3c3c3c"/>
<rect x="0" y="166" width="272" height="1" fill="#1e1e1e"/>
<text x="17" y="196" font-size="17.500" fill="#c4c4c4" textLength="46" lengthAdjust="spacingAndGlyphs">Select</text>
<text x="88" y="196" font-size="17.500" fill="#c4c4c4" textLength="57" lengthAdjust="spacingAndGlyphs">Display</text>
<text x="170" y="196" font-size="17.500" fill="#c4c4c4" textLength="29" lengthAdjust="spacingAndGlyphs">Edit</text>
<rect x="4" y="205" width="150" height="30" fill="#4d4d4d"/>
<path d="M162 216l9 9M171 216l-9 9" stroke="#c4c4c4" stroke-width="2.600"/>
<rect x="179" y="207" width="21" height="26" fill="#3a74c5" stroke="#9fc2ea"/>
<path d="M182 212h10l-4 6v6l-2-2v-4z" fill="#e4e4e4" stroke="#222" stroke-width=".7"/><rect x="194" y="209" width="4" height="22" fill="#8cb9ea"/>
<rect x="203" y="207" width="1" height="26" fill="#5a5a5a"/>
<rect x="213" y="220" width="10" height="9" fill="#e2d6b8"/><path d="M215 220v-3a3 3 0 0 1 6 0v3" fill="none" stroke="#ddd" stroke-width="1.500"/>
<path d="M255 209l5 5-5 5M261 209l5 5-5 5" fill="none" stroke="#40457f" stroke-width="2"/>

<!-- left icon strip -->
<g>
<use href="#blueic" x="1" y="240"/><circle cx="11" cy="250" r="7" fill="url(#gSph)"/>
<use href="#blueic" x="1" y="262"/><circle cx="9" cy="270" r="5.500" fill="url(#gSph)"/><rect x="10" y="272" width="8" height="7" fill="#ddd" stroke="#333" stroke-width=".6"/>
<use href="#blueic" x="1" y="286"/><use href="#spot" x="3" y="288"/>
<use href="#blueic" x="1" y="309"/><use href="#cam" x="4" y="311"/>
<use href="#blueic" x="1" y="332"/><rect x="5" y="336" width="12" height="11" rx="2" fill="#dcdcdc"/><circle cx="11" cy="341" r="3.500" fill="#3a74c5"/><path d="M11 347h7" stroke="#ddd"/>
<use href="#blueic" x="1" y="355"/><path d="M3 362q4-3 8 0t7 0M3 367q4-3 8 0t7 0M3 372q4-3 8 0t7 0" fill="none" stroke="#b9d3ee" stroke-width="1.200"/>
<use href="#blueic" x="1" y="378"/><rect x="6" y="382" width="7" height="7" fill="#ddd"/><rect x="10" y="387" width="7" height="7" fill="#aab"/>
<use href="#blueic" x="1" y="401"/><rect x="7" y="405" width="9" height="10" fill="#dfdfdf"/>
<use href="#blueic" x="1" y="424"/><path d="M5 434l12-7M5 434l12 7" stroke="#e2e2e2"/><circle cx="5" cy="434" r="2" fill="#e2e2e2"/>
<use href="#blueic" x="1" y="447"/><rect x="5" y="451" width="10" height="11" fill="#e5c89c"/><circle cx="16" cy="461" r="2.500" fill="#f0d870"/>
<use href="#blueic" x="1" y="470"/><rect x="5" y="474" width="12" height="10" fill="#dcdcdc"/><circle cx="16" cy="484" r="2.500" fill="#8fc5ea"/>
<use href="#blueic" x="1" y="493"/><rect x="5" y="497" width="12" height="10" fill="#dcdcdc"/><circle cx="16" cy="507" r="2.500" fill="#8fc5ea"/>
</g>
<rect x="2" y="518" width="18" height="1" fill="#666"/>
<rect x="5" y="525" width="12" height="14" fill="#dcdcdc"/><path d="M6 528h10M6 531h10M6 534h10" stroke="#777"/>
<rect x="5" y="548" width="12" height="14" fill="#e2e2e2"/>
<rect x="5" y="571" width="12" height="14" fill="#e2e2e2"/><path d="M7 574h8M7 577h8" stroke="#777"/>
<rect x="2" y="593" width="18" height="1" fill="#666"/>
<path d="M3 600h16l-6 8v7h-4v-7z" fill="#828282"/>
<path d="M4 623h12l-4 6v5l-3-3v-2z" fill="#d8d8d8"/><rect x="12" y="629" width="7" height="7" fill="#ddd" stroke="#333" stroke-width=".6"/>
<rect x="5" y="646" width="12" height="14" fill="#e2e2e2"/><rect x="5" y="650" width="12" height="3" fill="#444"/>

<!-- tree panel -->
<rect x="25" y="237.500" width="242" height="694" fill="#4a4a4a" stroke="#0e0e0e"/>
<rect x="26" y="238" width="241" height="23" fill="#484848"/>
<rect x="25" y="261" width="242" height="1" fill="#2a2a2a"/>
<text x="29" y="255" font-size="16.500" fill="#cfcfcf" textLength="190" lengthAdjust="spacingAndGlyphs">Name (Sorted Descending)</text>

<g clip-path="url(#rows)">
<rect x="26" y="262" width="215" height="643" fill="#4a4a4a"/>
<rect x="76" y="262" width="165" height="22" fill="#5a5a5a"/>
<rect x="76" y="284" width="165" height="22" fill="#484848"/>
<rect x="76" y="306" width="165" height="22" fill="#5a5a5a"/>
<rect x="76" y="328" width="165" height="22" fill="#484848"/>
<rect x="76" y="350" width="165" height="22" fill="#5a5a5a"/>
<rect x="76" y="372" width="165" height="22" fill="#484848"/>
<rect x="76" y="394" width="165" height="22" fill="#808080"/>
<rect x="94" y="416" width="147" height="489" fill="#808080"/>
<rect x="76" y="416" width="18" height="489" fill="#4e4e4e"/>
<path d="M34 290h14M34 312h14M34 334h14M34 356h14M34 378h14" stroke="#5a5a5a" fill="none" stroke-dasharray="1 1"/>
<path d="M53 420v480" stroke="#555" stroke-dasharray="1 1" fill="none"/>

<use href="#bulb" x="44" y="263"/><use href="#spot" x="60" y="264"/>
<use href="#bulb" x="44" y="285"/><use href="#spot" x="60" y="286"/>
<use href="#bulb" x="44" y="307"/><circle cx="67" cy="315" r="7.500" fill="url(#gSph)"/>
<use href="#bulbg" x="44" y="329"/><circle cx="67" cy="337" r="7.500" fill="url(#gSph)"/>
<use href="#bulb" x="44" y="351"/><use href="#cam" x="60" y="351"/>
<use href="#bulb" x="44" y="373"/><use href="#cam" x="60" y="373"/>
<path d="M29 402h12l-6 6z" fill="#a8a8a8"/>
<use href="#bulb" x="44" y="395"/><rect x="60" y="396" width="15" height="17" fill="#4a4a4a" stroke="#333"/><rect x="63" y="400" width="6" height="6" fill="#ddd"/><rect x="67" y="404" width="5" height="5" fill="#bbb"/>

<g>
<use href="#bulb" x="62" y="417"/><circle cx="85" cy="425" r="7.500" fill="url(#gSph)"/>
<use href="#bulb" x="62" y="439"/><circle cx="85" cy="447" r="7.500" fill="url(#gSph)"/>
<use href="#bulb" x="62" y="461"/><circle cx="85" cy="469" r="7.500" fill="url(#gSph)"/>
<use href="#bulb" x="62" y="483"/><circle cx="85" cy="491" r="7.500" fill="url(#gSph)"/>
<use href="#bulb" x="62" y="505"/><circle cx="85" cy="513" r="7.500" fill="url(#gSph)"/>
<use href="#bulb" x="62" y="527"/><circle cx="85" cy="535" r="7.500" fill="url(#gSph)"/>
<use href="#bulb" x="62" y="549"/><circle cx="85" cy="557" r="7.500" fill="url(#gSph)"/>
<use href="#bulb" x="62" y="571"/><circle cx="85" cy="579" r="7.500" fill="url(#gSph)"/>
<use href="#bulb" x="62" y="593"/><circle cx="85" cy="601" r="7.500" fill="url(#gSph)"/>
<use href="#bulb" x="62" y="615"/><circle cx="85" cy="623" r="7.500" fill="url(#gSph)"/>
<use href="#bulb" x="62" y="637"/><circle cx="85" cy="645" r="7.500" fill="url(#gSph)"/>
<use href="#bulb" x="62" y="659"/><circle cx="85" cy="667" r="7.500" fill="url(#gSph)"/>
<use href="#bulb" x="62" y="681"/><circle cx="85" cy="689" r="7.500" fill="url(#gSph)"/>
<use href="#bulb" x="62" y="703"/><circle cx="85" cy="711" r="7.500" fill="url(#gSph)"/>
<use href="#bulb" x="62" y="725"/><circle cx="85" cy="733" r="7.500" fill="url(#gSph)"/>
<use href="#bulb" x="62" y="747"/><circle cx="85" cy="755" r="7.500" fill="url(#gSph)"/>
<use href="#bulb" x="62" y="769"/><circle cx="85" cy="777" r="7.500" fill="url(#gSph)"/>
<use href="#bulb" x="62" y="791"/><circle cx="85" cy="799" r="7.500" fill="url(#gSph)"/>
<use href="#bulb" x="62" y="813"/><circle cx="85" cy="821" r="7.500" fill="url(#gSph)"/>
<use href="#bulb" x="62" y="835"/><circle cx="85" cy="843" r="7.500" fill="url(#gSph)"/>
<use href="#bulb" x="62" y="857"/><circle cx="85" cy="865" r="7.500" fill="url(#gSph)"/>
<use href="#bulb" x="62" y="879"/><circle cx="85" cy="887" r="7.500" fill="url(#gSph)"/>
<use href="#bulb" x="62" y="901"/><circle cx="85" cy="909" r="7.500" fill="url(#gSph)"/>
</g>

<text class="t" x="80" y="279" textLength="110" lengthAdjust="spacingAndGlyphs">Spot001.Target</text>
<text class="t" x="80" y="301" textLength="58" lengthAdjust="spacingAndGlyphs">Spot001</text>
<text class="t" x="80" y="323" textLength="65" lengthAdjust="spacingAndGlyphs">Plane002</text>
<text class="t" x="80" y="345" font-style="italic" style="fill:#8c8c8c" textLength="65" lengthAdjust="spacingAndGlyphs">Plane001</text>
<text class="t" x="80" y="367" textLength="167" lengthAdjust="spacingAndGlyphs">PhysCamera001.Target</text>
<text class="t" x="80" y="389" textLength="113" lengthAdjust="spacingAndGlyphs">PhysCamera001</text>
<text class="t" x="80" y="411" textLength="70" style="fill:#b4b4b4" lengthAdjust="spacingAndGlyphs">Group001</text>
<g>
<text class="t" x="98" y="433" textLength="72" style="fill:#b9b9b9" lengthAdjust="spacingAndGlyphs">Object001</text>
<text class="t" x="98" y="455" textLength="84" style="fill:#b9b9b9" lengthAdjust="spacingAndGlyphs">Cylinder011</text>
<text class="t" x="98" y="477" textLength="84" style="fill:#b9b9b9" lengthAdjust="spacingAndGlyphs">Cylinder010</text>
<text class="t" x="98" y="499" textLength="84" style="fill:#b9b9b9" lengthAdjust="spacingAndGlyphs">Cylinder009</text>
<text class="t" x="98" y="521" textLength="84" style="fill:#b9b9b9" lengthAdjust="spacingAndGlyphs">Cylinder008</text>
<text class="t" x="98" y="543" textLength="84" style="fill:#b9b9b9" lengthAdjust="spacingAndGlyphs">Cylinder007</text>
<text class="t" x="98" y="565" textLength="84" style="fill:#b9b9b9" lengthAdjust="spacingAndGlyphs">Cylinder006</text>
<text class="t" x="98" y="587" textLength="84" style="fill:#b9b9b9" lengthAdjust="spacingAndGlyphs">Cylinder005</text>
<text class="t" x="98" y="609" textLength="84" style="fill:#b9b9b9" lengthAdjust="spacingAndGlyphs">Cylinder004</text>
<text class="t" x="98" y="631" textLength="84" style="fill:#b9b9b9" lengthAdjust="spacingAndGlyphs">Cylinder003</text>
<text class="t" x="98" y="653" textLength="84" style="fill:#b9b9b9" lengthAdjust="spacingAndGlyphs">Cylinder002</text>
<text class="t" x="98" y="675" textLength="84" style="fill:#b9b9b9" lengthAdjust="spacingAndGlyphs">Cylinder001</text>
<text class="t" x="98" y="697" textLength="53" style="fill:#b9b9b9" lengthAdjust="spacingAndGlyphs">Box012</text>
<text class="t" x="98" y="719" textLength="52" style="fill:#b9b9b9" lengthAdjust="spacingAndGlyphs">Box011</text>
<text class="t" x="98" y="741" textLength="53" style="fill:#b9b9b9" lengthAdjust="spacingAndGlyphs">Box010</text>
<text class="t" x="98" y="763" textLength="53" style="fill:#b9b9b9" lengthAdjust="spacingAndGlyphs">Box009</text>
<text class="t" x="98" y="785" textLength="53" style="fill:#b9b9b9" lengthAdjust="spacingAndGlyphs">Box008</text>
<text class="t" x="98" y="807" textLength="53" style="fill:#b9b9b9" lengthAdjust="spacingAndGlyphs">Box007</text>
<text class="t" x="98" y="829" textLength="53" style="fill:#b9b9b9" lengthAdjust="spacingAndGlyphs">Box006</text>
<text class="t" x="98" y="851" textLength="53" style="fill:#b9b9b9" lengthAdjust="spacingAndGlyphs">Box005</text>
<text class="t" x="98" y="873" textLength="53" style="fill:#b9b9b9" lengthAdjust="spacingAndGlyphs">Box004</text>
<text class="t" x="98" y="895" textLength="53" style="fill:#b9b9b9" lengthAdjust="spacingAndGlyphs">Box003</text>
<text class="t" x="98" y="917" textLength="53" style="fill:#b9b9b9" lengthAdjust="spacingAndGlyphs">Box002</text>
</g>
</g>

<!-- scrollbars -->
<rect x="241" y="262" width="26" height="643" fill="#f0f0f0"/>
<rect x="242" y="288" width="25" height="553" fill="#c9c9c9"/>
<path d="M249 282l6-6 6 6M249 889l6 6 6-6" fill="none" stroke="#444" stroke-width="2.200"/>
<rect x="26" y="905" width="241" height="26" fill="#f0f0f0"/>
<rect x="51" y="906" width="104" height="25" fill="#cdcdcd"/>
<path d="M42 912l-7 6 7 6M222 912l7 6-7 6" fill="none" stroke="#444" stroke-width="2.200"/>

<!-- workspace combo -->
<rect x="4" y="936" width="145" height="30" fill="#555"/>
<g clip-path="url(#wsclip)"><text x="6" y="958" font-size="18" fill="#e8ea4e" textLength="141" lengthAdjust="spacingAndGlyphs">Workspace: Defau</text></g>
<path d="M153 951h6l-3 4z" fill="#ddd"/>
<rect x="166" y="936" width="1" height="30" fill="#6a6a6a"/>
<path d="M173 948l7-4 7 4-7 4z" fill="#dedede"/><path d="M173 952l7-4 7 4-7 4z" fill="#c8c8c8"/><path d="M173 956l7-4 7 4-7 4z" fill="#b8b8b8"/>
<rect x="193" y="935" width="21" height="32" fill="#3c79d8"/>
<rect x="200" y="941" width="7" height="7" fill="#e8e8e8"/><path d="M203.500 948v5M197 958v-4h13v4" stroke="#e8e8e8" fill="none"/><rect x="195" y="957" width="5" height="5" fill="#e8e8e8"/><rect x="201" y="957" width="5" height="5" fill="#e8e8e8"/><rect x="207" y="957" width="5" height="5" fill="#e8e8e8"/>
<rect x="218" y="936" width="1" height="30" fill="#6a6a6a"/>
<path d="M255 937l5 5-5 5M261 937l5 5-5 5" fill="none" stroke="#40457f" stroke-width="2"/>
<rect x="0" y="971.500" width="1920" height="1" fill="#1c1c1c"/>
<rect x="272" y="166" width="1.500" height="806" fill="#2c2c2c"/>

<!-- right command panel -->
<rect x="1630" y="166" width="290" height="806" fill="#3f3f3f"/>
<rect x="1630" y="166" width="290" height="1" fill="#2a2a2a"/>
<rect x="1632" y="193" width="288" height="1" fill="#111"/>
<g fill="#454545" stroke="#1c1c1c">
<path d="M1633 193v-20q0-3 3-3h21q3 0 3 3v20z" fill="#4a4a4a"/>
<path d="M1661 193v-20q0-3 3-3h22q3 0 3 3v20z" fill="#333"/>
<path d="M1690 193v-20q0-3 3-3h22q3 0 3 3v20z" fill="#333"/>
<path d="M1719 193v-20q0-3 3-3h22q3 0 3 3v20z" fill="#333"/>
<path d="M1748 193v-20q0-3 3-3h22q3 0 3 3v20z" fill="#333"/>
<path d="M1778 193v-20q0-3 3-3h22q3 0 3 3v20z" fill="#333"/>
</g>
<circle cx="1647" cy="181" r="5" fill="#f6c85a"/><path d="M1647 173v16M1639 181h16M1641 175l12 12M1653 175l-12 12" stroke="#d68b3a" stroke-width="1.500"/>
<path d="M1668 191q0-16 16-16" fill="none" stroke="#58a9dc" stroke-width="3"/><path d="M1668 177v12M1670 175h12" stroke="#7a7a7a"/>
<rect x="1698" y="172" width="11" height="10" fill="#bdbdbd"/><path d="M1703 182v3M1695 189v-3h17v3" stroke="#bbb" fill="none"/><rect x="1694" y="188" width="5" height="4" fill="#aaa"/><rect x="1701" y="188" width="5" height="4" fill="#aaa"/><rect x="1708" y="188" width="5" height="4" fill="#aaa"/>
<circle cx="1736" cy="181" r="9" fill="none" stroke="#cfcfcf" stroke-width="2"/><circle cx="1736" cy="181" r="4.500" fill="none" stroke="#cfcfcf" stroke-width="1.500"/><circle cx="1736" cy="181" r="1.500" fill="#ddd"/>
<rect x="1754" y="173" width="19" height="14" fill="#ddd"/><rect x="1760" y="176" width="7" height="7" fill="none" stroke="#333"/><rect x="1759" y="188" width="10" height="2" fill="#aaa"/>
<path d="M1783 191l10-13" stroke="#a86b5e" stroke-width="3"/><path d="M1789 173l9 8-3 2-9-7z" fill="#9a9a9a"/>
<!-- creation icons -->
<circle cx="1658" cy="222" r="7.500" fill="url(#gSph)"/>
<circle cx="1679" cy="219" r="5.500" fill="url(#gSph)"/><rect x="1681" y="222" width="9" height="8" fill="#ddd" stroke="#444" stroke-width=".6"/>
<use href="#spot" x="1699" y="214"/>
<rect x="1719" y="210" width="22" height="22" fill="#3a74c5"/><use href="#cam" x="1723" y="213"/>
<rect x="1747" y="216" width="11" height="11" rx="2" fill="#ddd"/><circle cx="1752" cy="221" r="3" fill="#555"/><path d="M1752 227h10" stroke="#ccc"/>
<path d="M1770 217q4-3 7 0t7 0M1770 222q4-3 7 0t7 0M1770 227q4-3 7 0t7 0" fill="none" stroke="#ccc" stroke-width="1.200"/>
<circle cx="1801" cy="219" r="3.500" fill="#ddd"/><circle cx="1805" cy="224" r="3.500" fill="#999"/><path d="M1795 216l8 8M1801 212v6" stroke="#ddd"/>
<!-- standard combo -->
<rect x="1647" y="250" width="270" height="19" fill="#e3e3e3"/><path d="M1647 269.500V249.500H1917" stroke="#0d0d0d" fill="none" stroke-width="1.500"/>
<text x="1649" y="264" font-size="11.500" fill="#222" textLength="44" lengthAdjust="spacingAndGlyphs">Standard</text>
<path d="M1900 258l5 5 5-5" fill="none" stroke="#444"/>
<rect x="1635" y="293" width="280" height="1" fill="#1c1c1c"/>
<rect x="1915" y="293" width="1" height="679" fill="#333"/>
<!-- object type rollout -->
<rect x="1637.500" y="306" width="271" height="104" fill="none" stroke="#0e0e0e"/>
<rect x="1640.500" y="298.500" width="265" height="15" fill="#454545" stroke="#6f6f6f"/>
<rect x="1644" y="309" width="5" height="1.500" fill="#ddd"/>
<text x="1743" y="310" font-size="11" fill="#cfcfcf" textLength="59" lengthAdjust="spacingAndGlyphs">Object Type</text>
<rect x="1693.500" y="323.500" width="11" height="11" fill="#3a3a3a" stroke="#1a1a1a" stroke-width="1.500"/>
<text x="1740" y="329" font-size="10.500" fill="#1c1c1c" textLength="42" lengthAdjust="spacingAndGlyphs">AutoGrid</text>
<g fill="#424242" stroke="#242424">
<rect x="1652" y="344" width="114" height="28"/><rect x="1782" y="344" width="114" height="28"/><rect x="1652" y="377" width="114" height="27"/>
</g>
<path d="M1652 372h114v-28M1782 372h114v-28M1652 404h114v-27" fill="none" stroke="#0d0d0d"/>
<text x="1688" y="362" font-size="11" fill="#b8b8b8" textLength="39" lengthAdjust="spacingAndGlyphs">Physical</text>
<text x="1821" y="362" font-size="11" fill="#b8b8b8" textLength="33" lengthAdjust="spacingAndGlyphs">Target</text>
<text x="1696" y="395" font-size="11" fill="#b8b8b8" textLength="22" lengthAdjust="spacingAndGlyphs">Free</text>
<!-- name and color -->
<rect x="1637.500" y="426" width="271" height="61" fill="none" stroke="#0e0e0e"/>
<rect x="1640.500" y="418.500" width="265" height="15" fill="#454545" stroke="#6f6f6f"/>
<rect x="1644" y="429" width="5" height="1.500" fill="#ddd"/>
<text x="1734" y="430" font-size="11" fill="#cfcfcf" textLength="76" lengthAdjust="spacingAndGlyphs">Name and Color</text>
<rect x="1649" y="445" width="218" height="28" fill="#555"/><path d="M1649 473.500V445H1867" stroke="#0d0d0d" fill="none" stroke-width="1.500"/>
<text x="1652" y="458" font-size="11" font-weight="bold" fill="#cfcfcf" textLength="55" lengthAdjust="spacingAndGlyphs">Group001</text>
<rect x="1873" y="444" width="27" height="29" fill="#fff"/>

<!-- timeline -->
<rect x="274" y="928" width="1646" height="44" fill="#3c3c3c"/>
<rect x="276" y="927" width="15" height="16" fill="#3c3c3c" stroke="#2a2a2a"/>
<path d="M284 932l-4 4 4 4" fill="none" stroke="#aaa"/>
<rect x="291" y="927" width="124" height="16" fill="#454545"/><rect x="291" y="942" width="124" height="1.500" fill="#111"/><rect x="414" y="927" width="1.500" height="16" fill="#111"/>
<text x="334" y="941" font-size="13" fill="#c0c0c0" textLength="34" lengthAdjust="spacingAndGlyphs">0 / 100</text>
<rect x="415" y="927" width="15" height="16" fill="#3f3f3f" stroke="#555"/>
<path d="M420 932l4 4-4 4" fill="none" stroke="#bbb"/>
<rect x="326" y="946" width="1252" height="25" fill="#2e2e2e"/>
<rect x="274" y="945.500" width="1354" height="1" fill="#111"/>
<path d="M330 951H1576" stroke="#6f6f6f" stroke-width="9" stroke-dasharray="1 11.440" fill="none"/>
<path d="M330 958H1576" stroke="#6f6f6f" stroke-width="6" stroke-dasharray="1 61.200" fill="none"/>
<rect x="327" y="948" width="7" height="23" fill="#8d8a2a"/>
<rect x="287" y="950" width="18" height="8" fill="#3c3c3c" stroke="#bbb"/><path d="M289 956l4-3 3 2 3-3 4 3M291 966v-6M299 966v-6" stroke="#bbb" fill="none"/><rect x="287" y="965" width="18" height="3" fill="#bbb"/>
<g>
<text class="n" x="330" y="970">0</text><text class="n" x="392" y="970">5</text><text class="n" x="453" y="970">10</text><text class="n" x="517" y="970">15</text><text class="n" x="578" y="970">20</text><text class="n" x="640" y="970">25</text><text class="n" x="702" y="970">30</text><text class="n" x="765" y="970">35</text><text class="n" x="827" y="970">40</text><text class="n" x="890" y="970">45</text><text class="n" x="951" y="970">50</text><text class="n" x="1014" y="970">55</text><text class="n" x="1075" y="970">60</text><text class="n" x="1138" y="970">65</text><text class="n" x="1200" y="970">70</text><text class="n" x="1263" y="970">75</text><text class="n" x="1324" y="970">80</text><text class="n" x="1387" y="970">85</text><text class="n" x="1449" y="970">90</text><text class="n" x="1511" y="970">95</text><text class="n" x="1574" y="970">100</text>
</g>

<!-- status bar -->
<rect x="0" y="972" width="1920" height="48" fill="#3c3c3c"/>
<rect x="0" y="975" width="98" height="21" fill="#d8bfc0"/><rect x="0" y="998" width="98" height="21" fill="#fff"/>
<rect x="0" y="972" width="98" height="2" fill="#b8b8b8"/><rect x="0" y="996" width="98" height="2" fill="#888"/>
<rect x="103" y="972" width="1" height="48" fill="#1c1c1c"/>
<rect x="106" y="977" width="944" height="19" fill="#474747"/><rect x="106" y="977" width="944" height="1" fill="#1c1c1c"/>
<rect x="106" y="1001" width="1240" height="1" fill="#1c1c1c"/>
<rect x="106" y="1002" width="1240" height="18" fill="#474747"/>
<text x="112" y="991" font-size="12.500" fill="#c8c8c8" textLength="81" lengthAdjust="spacingAndGlyphs">1 Group Selected</text>
<text x="111" y="1016" font-size="12.500" fill="#c8c8c8" textLength="119" lengthAdjust="spacingAndGlyphs">Rendering Time  0:18:21</text>
<text x="244" y="1016" font-size="12.500" fill="#c8c8c8" textLength="123" lengthAdjust="spacingAndGlyphs">Translation Time  0:00:57</text>
<ellipse cx="1063" cy="983" rx="4.500" ry="6.500" fill="#c66e70"/><path d="M1063 989v8" stroke="#c9a6a6" stroke-width="1.300"/>
<rect x="1084" y="984" width="10" height="9" fill="#e0d0b0"/><path d="M1086 984v-3a3 3 0 0 1 6 0v3" fill="none" stroke="#ddd" stroke-width="1.500"/>
<rect x="1110" y="979" width="13" height="13" fill="#ddd"/><circle cx="1116.500" cy="985.500" r="3.500" fill="none" stroke="#333"/><path d="M1116.500 979v4M1116.500 988v4M1110 985.500h4M1119 985.500h4" stroke="#333"/>
<text x="1133" y="991" font-size="12" fill="#9f9f9f" textLength="9" lengthAdjust="spacingAndGlyphs">X:</text>
<rect x="1144" y="977" width="56" height="19" fill="#565656"/><path d="M1144 996V977H1200" stroke="#0e0e0e" fill="none"/>
<text x="1147" y="991" font-size="13" fill="#b4b4b4" textLength="52" lengthAdjust="spacingAndGlyphs">2220.975c</text>
<text x="1214" y="991" font-size="12" fill="#9f9f9f" textLength="9" lengthAdjust="spacingAndGlyphs">Y:</text>
<rect x="1226" y="977" width="57" height="19" fill="#565656"/><path d="M1226 996V977H1283" stroke="#0e0e0e" fill="none"/>
<text x="1229" y="991" font-size="13" fill="#b4b4b4" textLength="53" lengthAdjust="spacingAndGlyphs">4082.683c</text>
<text x="1296" y="991" font-size="12" fill="#9f9f9f" textLength="9" lengthAdjust="spacingAndGlyphs">Z:</text>
<rect x="1308" y="977" width="56" height="19" fill="#565656"/><path d="M1308 996V977H1364" stroke="#0e0e0e" fill="none"/>
<text x="1311" y="991" font-size="13" fill="#b4b4b4" textLength="29" lengthAdjust="spacingAndGlyphs">0.0cm</text>
<rect x="1379" y="977" width="100" height="19" fill="#474747"/>
<text x="1384" y="991" font-size="13" fill="#c8c8c8" textLength="69" lengthAdjust="spacingAndGlyphs">Grid = 25.4cm</text>
<rect x="1355" y="1001" width="20" height="19" fill="#3a74c5"/><rect x="1360" y="1006" width="10" height="12" fill="#e0e0e0"/><path d="M1361 1004h9l2 2" stroke="#cfe0f4" fill="none"/>
<rect x="1379" y="1001" width="100" height="19" fill="#474747"/>
<text x="1384" y="1016" font-size="13" fill="#c8c8c8" textLength="66" lengthAdjust="spacingAndGlyphs">Add Time Tag</text>
<rect x="1484" y="975" width="41" height="43" fill="#444"/><path d="M1484 1018h41" stroke="#0e0e0e"/>
<circle cx="1495" cy="996" r="4" fill="none" stroke="#ddd" stroke-width="1.800"/><path d="M1499 996h16v4M1510 996v3" stroke="#ddd" stroke-width="1.800" fill="none"/>
<rect x="1531" y="976" width="44" height="19" fill="#474747"/><rect x="1531" y="998" width="44" height="20" fill="#474747"/>
<path d="M1531 995h44M1531 1018h44" stroke="#0e0e0e"/>
<text x="1542" y="992" font-size="13" fill="#c4c4c4" textLength="23" lengthAdjust="spacingAndGlyphs">Auto</text>
<text x="1539" y="1014" font-size="13" fill="#c4c4c4" textLength="27" lengthAdjust="spacingAndGlyphs">Set K.</text>
<rect x="1581" y="977" width="112" height="17" fill="#e0e0e0"/><path d="M1581 994V976.500H1693" stroke="#0e0e0e" fill="none" stroke-width="1.500"/>
<text x="1583" y="990" font-size="12.500" fill="#222" textLength="41" lengthAdjust="spacingAndGlyphs">Selected</text>
<path d="M1677 983l5 5 5-5" fill="none" stroke="#444"/>
<path d="M1585 1014q2-4 4-4t2-8q1-4 2 2t3 8" fill="none" stroke="#c9565a" stroke-width="1.500"/><path d="M1597 1018l3-3v3z" fill="#eee"/>
<rect x="1607" y="998" width="88" height="20" fill="#474747"/><path d="M1607 1018h88" stroke="#0e0e0e"/>
<text x="1630" y="1014" font-size="13" fill="#b8b8b8" textLength="42" lengthAdjust="spacingAndGlyphs">Filters...</text>
<!-- playback -->
<g fill="#cfcfcf" stroke="none">
<path d="M1705 980v12h1.500v-12zM1707 986l6-5v10zM1712 986l6-5v10zM1718 980v12h1.500v-12z"/>
<path d="M1732 986l6-5v10zM1739 981h2v10h-2zM1742 981h2v10h-2z"/>
<path d="M1758 980l9 6-9 6v-12zm2 3v6l4.500-3z" fill-rule="evenodd"/>
<path d="M1778 981h2v10h-2zM1781 981h2v10h-2zM1784 981l6 5-6 5z"/>
<path d="M1802 980v12h1.500v-12zM1804 981l6 5-6 5zM1810 981l6 5-6 5zM1816 980v12h1.500v-12z"/>
</g>
<rect x="1826" y="976" width="21" height="21" fill="#3a74c5"/><circle cx="1834" cy="988" r="5.500" fill="url(#gSph)"/><path d="M1842 980v7M1838.500 983.500h7" stroke="#fff"/>
<rect x="1852" y="979" width="6" height="6" fill="#ddd"/><rect x="1859" y="979" width="6" height="6" fill="#ddd"/><rect x="1852" y="986" width="6" height="6" fill="#ddd"/><circle cx="1864" cy="990" r="3.500" fill="none" stroke="#ddd"/>
<path d="M1873 979h4M1873 979v4M1891 979h-4M1891 979v4M1873 993h4M1873 993v-4M1891 993h-4M1891 993v-4" stroke="#ddd"/><rect x="1878" y="982" width="8" height="8" fill="#8ac06a"/>
<rect x="1899" y="977" width="8" height="8" fill="#ddd"/><rect x="1906" y="977" width="6" height="6" fill="#aaa"/><rect x="1900" y="986" width="12" height="7" fill="#7ba568"/>
<path d="M1706 1002v12h1.500v-12zM1708 1008l4-4v8zM1713 1004l4 4-4 4zM1718 1002v12h1.500v-12z" fill="#cfcfcf"/>
<rect x="1729" y="998" width="61" height="20" fill="#565656"/><path d="M1729 1018V998H1790" stroke="#0e0e0e" fill="none"/>
<text x="1731" y="1013" font-size="13" fill="#b8b8b8">0</text>
<rect x="1792" y="999" width="9" height="19" fill="#2e2e2e"/><path d="M1794 1006l2.500-3 2.500 3zM1794 1011l2.500 3 2.500-3z" fill="#ccc"/>
<rect x="1809" y="1001" width="10" height="12" fill="#6da0da"/><circle cx="1819" cy="1012" r="4" fill="#ddd"/>
<rect x="1829" y="1001" width="10" height="10" fill="none" stroke="#ddd" stroke-dasharray="1.500 1.500"/><circle cx="1839" cy="1011" r="2.500" fill="#ddd"/>
<path d="M1852 1009l2-7 1.500 5 .5-7 2 7 1-6 1.500 6 2-4-1 8q-1 5-5 5t-5-7z" fill="#ddd"/>
<circle cx="1882" cy="1009" r="6" fill="none" stroke="#ddd"/><path d="M1882 1001v16M1875 1009h14" stroke="#ddd" stroke-width=".8"/>
<rect x="1897" y="1002" width="12" height="12" fill="#222" stroke="#ddd"/><path d="M1900 1005l5 5M1900 1005v4M1900 1005h4" stroke="#ddd"/>

<!-- taskbar -->
<rect x="0" y="1020" width="1920" height="60" fill="#040404"/>
<rect x="1205" y="1020" width="140" height="60" fill="url(#gRed)"/>
<path d="M1296 1020h10l6 60h-9z" fill="#33383c" opacity=".7"/>
<rect x="72" y="1020" width="516" height="60" fill="#333"/>
<!-- windows -->
<path d="M24 1042.500l10-1.500v9.500H24zM35.500 1040.800l12.500-1.800v11.500H35.500zM24 1051.500h10v9.500l-10-1.500zM35.500 1051.500H48V1063l-12.500-1.800z" fill="#fff"/>
<circle cx="102" cy="1050" r="14" fill="none" stroke="#efefef" stroke-width="3.800"/>
<text x="126" y="1058" font-size="21" fill="#8f8f8f" textLength="181" lengthAdjust="spacingAndGlyphs">Type here to search</text>
<rect x="552" y="1038" width="10" height="18" rx="5" fill="none" stroke="#b8b8b8" stroke-width="1.600"/><path d="M549 1050q0 10 8 10t8-10M557 1060v3M552 1063h10" fill="none" stroke="#b8b8b8" stroke-width="1.400"/>
<rect x="615" y="1041" width="18" height="18" fill="none" stroke="#fff" stroke-width="1.500"/><path d="M612 1043h-3v14h3M636 1043h3v14h-3" fill="none" stroke="#ddd"/>
<!-- edge -->
<path d="M689 1053c0-10 7-18 15-18 7 0 11 5 11 13v4h-20c1 6 10 7 18 3v7c-10 5-24 1-24-9zM695 1046h12c0-5-9-6-12 0z" fill="#0f78d4" fill-rule="evenodd"/>
<!-- folder -->
<path d="M760 1037h12l3 4h17v24h-32z" fill="#f3d36c"/><rect x="760" y="1044" width="32" height="21" fill="#f8e08a"/><rect x="770" y="1055" width="12" height="10" fill="#3b83c4"/><path d="M767 1062h4v-4h10v4h4v3h-18z" fill="#2f73b0"/>
<!-- store -->
<path d="M846 1039a6 6 0 0 1 11 0" fill="none" stroke="#ddd" stroke-width="2"/><rect x="834" y="1039" width="34" height="27" fill="#fff"/><rect x="843" y="1046" width="7" height="7" fill="#f25022"/><rect x="852" y="1046" width="7" height="7" fill="#7fba00"/><rect x="843" y="1055" width="7" height="7" fill="#00a4ef"/><rect x="852" y="1055" width="7" height="7" fill="#ffb900"/>
<!-- active max -->
<rect x="891" y="1020" width="71" height="60" fill="#2d2d2d"/><rect x="891" y="1077" width="71" height="3" fill="#7ba6e6"/>
<rect x="908" y="1031" width="37" height="37" fill="#4fa9ad"/><path d="M914 1033h12l10 12-8 11h-13l7-11z" fill="#1ea6ac"/><path d="M914 1033l9 12-7 11z" fill="#0c6a73"/><path d="M926 1033l10 12h-13z" fill="#3cc4c4"/><text x="925" y="1066" font-size="9" fill="#d8f0f0" textLength="17" lengthAdjust="spacingAndGlyphs">MAX</text>
<!-- tray -->
<text x="1496" y="1058" font-size="20" fill="#d9d9d9" textLength="66" lengthAdjust="spacingAndGlyphs">Desktop</text>
<path d="M1575 1029l5 5-5 5M1580 1029l5 5-5 5" fill="none" stroke="#eee" stroke-width="1.200"/>
<path d="M1601 1054l9-9 9 9" fill="none" stroke="#eee" stroke-width="1.400"/>
<rect x="1636" y="1042" width="21" height="14" fill="#000" stroke="#eee" stroke-width="1.500"/><rect x="1638" y="1044" width="9" height="10" fill="#fff"/><rect x="1658" y="1046" width="2" height="6" fill="#eee"/>
<path d="M1674 1060q0-13 13-20M1679 1060q0-9 8-14M1683 1060q0-4 3-7" fill="none" stroke="#777" stroke-width="1.500"/><text x="1671" y="1046" font-size="12" fill="#ddd">*</text>
<path d="M1708 1046h4l6-6v20l-6-6h-4z" fill="none" stroke="#eee" stroke-width="1.400"/><path d="M1721 1046q3 4 0 8M1724 1043q5 7 0 14" fill="none" stroke="#eee" stroke-width="1.400"/>
<text x="1750" y="1044" font-size="19" fill="#e6e6e6" textLength="76" lengthAdjust="spacingAndGlyphs">12:30 AM</text>
<text x="1742" y="1071" font-size="19" fill="#e6e6e6" textLength="93" lengthAdjust="spacingAndGlyphs">12/25/2019</text>
<path d="M1859 1037h24v24h-15l-5 6v-6h-4z" fill="#f4f4f4"/><path d="M1863 1043h16M1863 1047h16M1863 1051h16" stroke="#333"/>
<circle cx="1882" cy="1061" r="12" fill="#3c3c3c" stroke="#8f8f8f" stroke-width="1.500"/>
<text x="1877" y="1068" font-size="18" font-weight="bold" fill="#f0f0f0">2</text>
</svg>
</body></html>
